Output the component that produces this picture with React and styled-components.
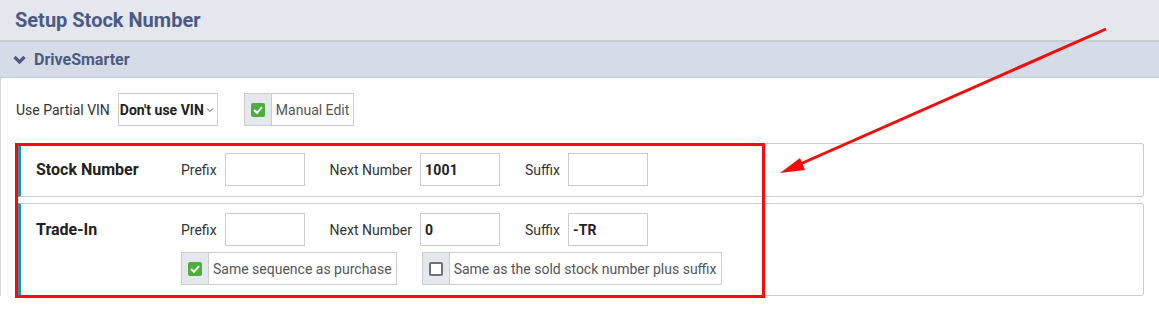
import React from "react";
import styled, { createGlobalStyle } from "styled-components";

const GlobalStyle = createGlobalStyle`
	body {
		margin: 0;
		font-family: Roboto, "Liberation Sans", sans-serif;
		background: #fff;
	}
`;

const Page = styled.div`
	position: relative;
	width: 1159px;
	height: 309px;
	overflow: hidden;
`;

const TitleBar = styled.div`
	height: 40px;
	background: #e4e7ed;
	border-bottom: 2px solid #c7ccd3;
	display: flex;
	align-items: center;
	padding-left: 15px;
	font-size: 20px;
	font-weight: 700;
	color: #4b5a83;
`;

const SectionHeader = styled.div`
	height: 35px;
	background: #d5dce7;
	border-bottom: 1px solid #c3cad4;
	display: flex;
	align-items: center;
	gap: 8px;
	padding-left: 13px;
	font-size: 16px;
	font-weight: 700;
	color: #4b5a83;
`;

const Content = styled.div`
	border-left: 1px solid #d3d7dc;
	padding: 15px 15px 0 17px;
	display: flex;
	flex-direction: column;
	gap: 6px;
`;

const TopRow = styled.div`
	display: flex;
	align-items: center;
	margin-left: -2px;
	margin-bottom: 11px;
	font-size: 14px;
	color: #333;
`;

const Select = styled.div`
	margin-left: 8px;
	width: 100px;
	height: 33px;
	box-sizing: border-box;
	border: 1px solid #c9ccd0;
	display: flex;
	align-items: center;
	justify-content: space-between;
	padding: 0 3px 0 1px;
	font-weight: 700;
	color: #222;
	font-size: 14px;
	white-space: nowrap;
`;

const CheckGroup = styled.div`
	display: flex;
	height: 33px;
	box-sizing: border-box;
	border: 1px solid #c9ccd0;
	margin-left: ${(p) => p.$offset || 0}px;
	font-size: 14px;
	color: #555;
	white-space: nowrap;
`;

const Addon = styled.div`
	width: 26px;
	background: #e4e7ec;
	border-right: 1px solid #c9ccd0;
	display: flex;
	align-items: center;
	justify-content: center;
`;

const CheckLabel = styled.div`
	display: flex;
	align-items: center;
	padding: 0 4px;
`;

const Box = styled.div`
	width: 14px;
	height: 14px;
	box-sizing: border-box;
	border-radius: 2px;
	background: ${(p) => (p.$checked ? "#4caf3b" : "#fff")};
	border: ${(p) => (p.$checked ? "none" : "2px solid #6f6f80")};
	display: flex;
	align-items: center;
	justify-content: center;
`;

const Card = styled.div`
	display: flex;
	align-items: flex-start;
	border: 1px solid #c8cdd3;
	border-left: 3px solid #1c93aa;
	border-radius: 0 3px 3px 0;
	padding: 9px 0 10px 15px;
`;

const CardTitle = styled.div`
	width: 145px;
	height: 33px;
	display: flex;
	align-items: center;
	font-size: 16px;
	font-weight: 700;
	color: #222;
	flex-shrink: 0;
`;

const CardBody = styled.div`
	display: flex;
	flex-direction: column;
	gap: 6px;
`;

const Fields = styled.div`
	display: flex;
	align-items: center;
	font-size: 14px;
	color: #333;
`;

const Label = styled.span`
	margin-right: 8px;
	margin-left: ${(p) => p.$gap || 0}px;
`;

const Input = styled.div`
	width: 80px;
	height: 33px;
	box-sizing: border-box;
	border: 1px solid #c9ccd0;
	display: flex;
	align-items: center;
	padding-left: 4px;
	font-weight: 700;
	color: #222;
	letter-spacing: 0.2px;
`;

const Options = styled.div`
	display: flex;
`;

const Highlight = styled.div`
	position: absolute;
	left: 15px;
	top: 143px;
	width: 750px;
	height: 155px;
	box-sizing: border-box;
	border: 3px solid #f50d0d;
	pointer-events: none;
`;

const Arrow = styled.svg`
	position: absolute;
	left: 0;
	top: 0;
	pointer-events: none;
`;

const Tick = () => (
	<svg width="10" height="8" viewBox="0 0 10 8">
		<path d="M1 4 L4 6.8 L9 1.2" fill="none" stroke="#fff" strokeWidth="2" />
	</svg>
);

const Check = ({ checked, label, offset }) => (
	<CheckGroup $offset={offset}>
		<Addon>
			<Box $checked={checked}>{checked && <Tick />}</Box>
		</Addon>
		<CheckLabel>{label}</CheckLabel>
	</CheckGroup>
);

const Row = ({ title, next, suffix, children }) => (
	<Card>
		<CardTitle>{title}</CardTitle>
		<CardBody>
			<Fields>
				<Label>Prefix</Label>
				<Input />
				<Label $gap={25}>Next Number</Label>
				<Input>{next}</Input>
				<Label $gap={25}>Suffix</Label>
				<Input>{suffix}</Input>
			</Fields>
			{children}
		</CardBody>
	</Card>
);

export default function App() {
	return (
		<Page>
			<GlobalStyle />
			<TitleBar>Setup Stock Number</TitleBar>
			<SectionHeader>
				<svg width="13" height="10" viewBox="0 0 13 10">
					<path d="M1.5 2 L6.5 7 L11.5 2" fill="none" stroke="#4b5a83" strokeWidth="3.2" />
				</svg>
				DriveSmarter
			</SectionHeader>
			<Content>
				<TopRow>
					Use Partial VIN
					<Select>
						Don't use VIN
						<svg width="8" height="6" viewBox="0 0 8 6">
							<path d="M1 1.5 L4 4.5 L7 1.5" fill="none" stroke="#555" strokeWidth="1" />
						</svg>
					</Select>
					<Check checked label="Manual Edit" offset={26} />
				</TopRow>
				<Row title="Stock Number" next="1001" />
				<Row title="Trade-In" next="0" suffix="-TR">
					<Options>
						<Check checked label="Same sequence as purchase" />
						<Check label="Same as the sold stock number plus suffix" offset={25} />
					</Options>
				</Row>
			</Content>
			<Highlight />
			<Arrow width="1159" height="309">
				<line x1="1106" y1="29" x2="798" y2="165" stroke="#f50d0d" strokeWidth="3" />
				<polygon points="780,173 800,158 805,170" fill="#f50d0d" />
			</Arrow>
		</Page>
	);
}
